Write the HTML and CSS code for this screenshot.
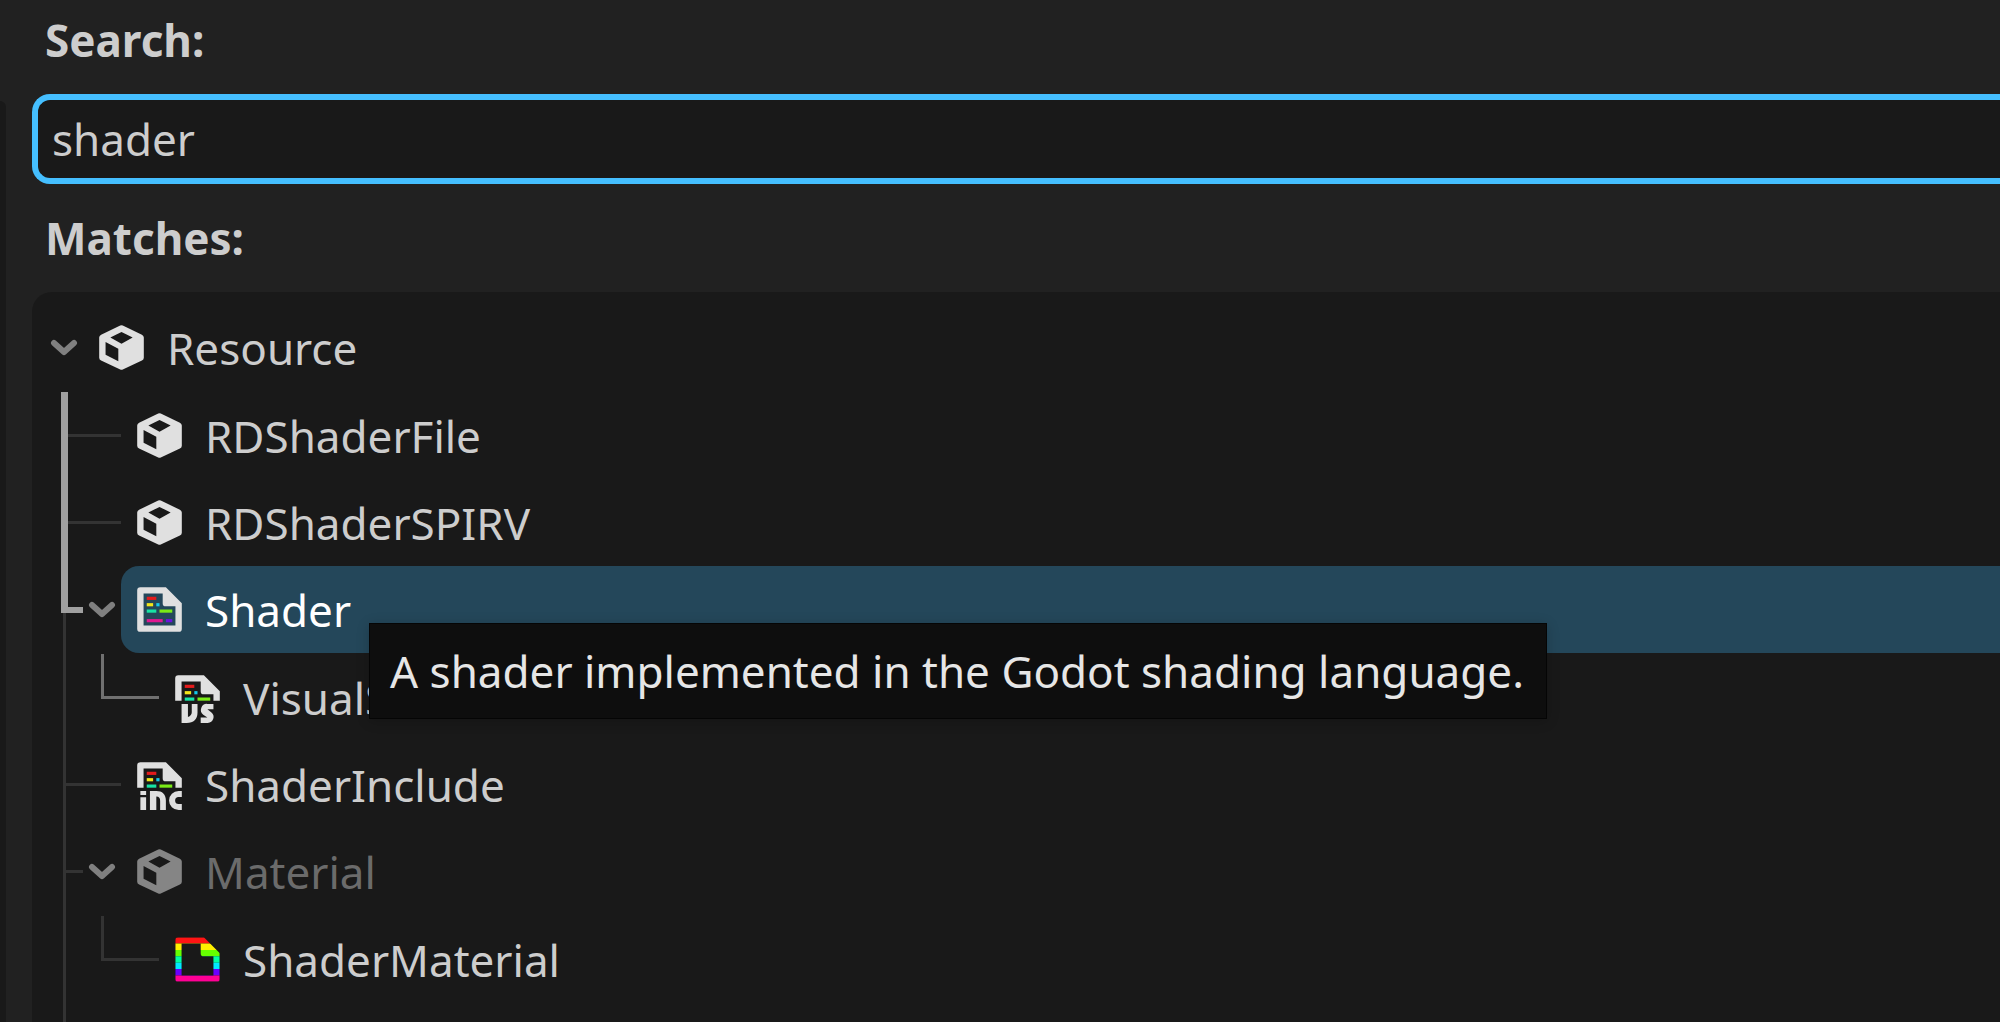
FILE: index.html
```html
<!DOCTYPE html>
<html lang="en">
<head>
  <meta charset="UTF-8" />
  <meta name="viewport" content="width=device-width, initial-scale=1.0" />
  <title>Create New Resource</title>
  <link rel="stylesheet" href="styles.css">
</head>
<body>
  <svg class="sprite" aria-hidden="true">
    <symbol id="chevron" viewBox="0 0 28 18">
      <path d="M4 4l10 9 10-9" fill="none" stroke="currentColor" stroke-width="6" stroke-linecap="round" stroke-linejoin="round" />
    </symbol>
    <symbol id="cube" viewBox="0 0 16 16">
      <path fill="currentColor" fill-rule="evenodd" d="M7.6 1.1a1 1 0 0 1 .8 0l6 2.9a1 1 0 0 1 .6.9v6.3a1 1 0 0 1-.6.9l-6 2.800a1 1 0 0 1-.8 0l-6-2.800a1 1 0 0 1-.6-.9V4.900a1 1 0 0 1 .6-.9zM8 3.100L4.500 4.900 8 6.800l3.500-1.900zM3 6.300v4l4 2V8.400z" />
    </symbol>
    <symbol id="code-lines" viewBox="0 0 16 16">
      <path fill="#e31b1b" d="M4 4h3v1H4z" />
      <path fill="#f2e61a" d="M4 6h2v1H4z" />
      <path fill="#14c8ea" d="M7 6h1v1H7z" />
      <path fill="#17e3a4" d="M4 8h3v1H4z" />
      <path fill="#7aea16" d="M8 8h4v1H8z" />
    </symbol>
    <symbol id="shader" viewBox="0 0 16 16">
      <path fill="#e0e0e0" fill-rule="evenodd" d="M2 1a1 1 0 0 0-1 1v12a1 1 0 0 0 1 1h12a1 1 0 0 0 1-1V6l-5-5zM3 3h6v3a1 1 0 0 0 1 1h3v6H3z" />
      <use href="#code-lines" />
      <path fill="#df1790" d="M4 11h5v1H4z" />
      <path fill="#6a12dc" d="M10 11h2v1h-2z" />
    </symbol>
    <symbol id="file-top" viewBox="0 0 16 16">
      <path fill="#e0e0e0" d="M2 1a1 1 0 0 0-1 1v7h2V3h6v3a1 1 0 0 0 1 1h3v2h2V6l-5-5z" />
      <use href="#code-lines" />
    </symbol>
    <symbol id="visual-shader" viewBox="0 0 16 16">
      <use href="#file-top" />
      <path fill="#e0e0e0" d="M3 10v6h1.600c2.200 0 3.400-1.200 3.400-3.200V10H6.200v2.600q0 1-1.200 1.500V10zM13 10h-2a1.900 1.900 0 0 0-1.200 3.400l1.300.9H9V16h2.200a1.900 1.900 0 0 0 1.100-3.400l-1.200-.9H13z" />
    </symbol>
    <symbol id="shader-include" viewBox="0 0 16 16">
      <use href="#file-top" />
      <path fill="#e0e0e0" d="M2 10h1.800v1.300H2zM2 12h1.800v4H2zM5 10v6h2v-4.200c.9 0 1.200.5 1.200 1.400V16H10v-3c0-2-1.100-3-3-3zM15 10h-1a3 3 0 0 0 0 6h1v-1.900h-1a1.100 1.100 0 0 1 0-2.200h1z" />
    </symbol>
    <clipPath id="file-clip">
      <path clip-rule="evenodd" d="M2 1a1 1 0 0 0-1 1v12a1 1 0 0 0 1 1h12a1 1 0 0 0 1-1V6l-5-5zM3 3h6v3a1 1 0 0 0 1 1h3v6H3z" />
    </clipPath>
    <symbol id="shader-material" viewBox="0 0 16 16">
      <g clip-path="url(#file-clip)">
        <path fill="#ff1414" d="M1 1h14v2H1z" />
        <path fill="#fff000" d="M1 3h14v2H1z" />
        <path fill="#66ff00" d="M1 5h14v2H1z" />
        <path fill="#00ffa2" d="M1 7h14v2H1z" />
        <path fill="#00eaff" d="M1 9h14v2H1z" />
        <path fill="#6a00ff" d="M1 11h14v2H1z" />
        <path fill="#ff0095" d="M1 13h14v2H1z" />
      </g>
    </symbol>
  </svg>

  <div class="side-panel"></div>
  <main class="dialog">
    <label class="heading" for="search">Search:</label>
    <input class="search" type="text" id="search" value="shader" />
    <h2 class="heading" id="matches">Matches:</h2>

    <div class="panel">
      <ul class="tree" role="tree" aria-labelledby="matches">
        <li role="treeitem" aria-expanded="true">
          <div class="row">
            <button class="toggle" aria-label="Collapse Resource"><svg><use href="#chevron" /></svg></button>
            <div class="item"><svg class="icon"><use href="#cube" /></svg>Resource</div>
          </div>
          <ul role="group">
            <li class="leaf active" role="treeitem">
              <div class="row"><div class="item"><svg class="icon"><use href="#cube" /></svg>RDShaderFile</div></div>
            </li>
            <li class="leaf active" role="treeitem">
              <div class="row"><div class="item"><svg class="icon"><use href="#cube" /></svg>RDShaderSPIRV</div></div>
            </li>
            <li class="current" role="treeitem" aria-expanded="true" aria-selected="true">
              <div class="row">
                <span class="elbow"></span>
                <button class="toggle" aria-label="Collapse Shader"><svg><use href="#chevron" /></svg></button>
                <div class="item selected"><svg class="icon"><use href="#shader" /></svg>Shader</div>
                <div class="tooltip" role="tooltip">A shader implemented in the Godot shading language.</div>
              </div>
              <ul class="bright" role="group">
                <li class="leaf last" role="treeitem">
                  <div class="row"><div class="item"><svg class="icon"><use href="#visual-shader" /></svg>VisualShader</div></div>
                </li>
              </ul>
            </li>
            <li class="leaf" role="treeitem">
              <div class="row"><div class="item"><svg class="icon"><use href="#shader-include" /></svg>ShaderInclude</div></div>
            </li>
            <li role="treeitem" aria-expanded="true">
              <div class="row">
                <button class="toggle" aria-label="Collapse Material"><svg><use href="#chevron" /></svg></button>
                <div class="item dimmed"><svg class="icon"><use href="#cube" /></svg>Material</div>
              </div>
              <ul role="group">
                <li class="leaf last" role="treeitem">
                  <div class="row"><div class="item"><svg class="icon"><use href="#shader-material" /></svg>ShaderMaterial</div></div>
                </li>
              </ul>
            </li>
            <li class="more" role="none"></li>
          </ul>
        </li>
      </ul>
    </div>
  </main>
</body>
</html>
```

FILE: styles.css
```css
* {
  box-sizing: border-box;
}
body {
  margin: 0;
  height: 100vh;
  overflow: hidden;
  display: flex;
  background-color: #212121;
  color: #cdcdcd;
  font-family: "Noto Sans", sans-serif;
  font-size: 44px;
  line-height: 60px;
}
.sprite {
  position: absolute;
  width: 0;
  height: 0;
}
.side-panel {
  width: 6px;
  margin-top: 101px;
  background-color: #191919;
  border-top-right-radius: 6px;
}
.dialog {
  flex: 1;
  min-width: 0;
  display: flex;
  flex-direction: column;
  gap: 24px;
  padding: 10px 0 0 26px;
}
.heading {
  margin: 0;
  padding-left: 13px;
  font-size: 44px;
  font-weight: bold;
}
.search {
  width: 100%;
  padding: 9px 14px;
  border: 6px solid #45bfff;
  border-right: none;
  border-radius: 18px 0 0 18px;
  background-color: #191919;
  color: inherit;
  font: inherit;
  outline: none;
}

/* tree */
.panel {
  flex: 1;
  padding: 12px 0 0 13px;
  background-color: #191919;
  border-top-left-radius: 20px;
}
ul {
  list-style: none;
  margin: 0;
  padding: 0;
}
ul ul {
  padding: 1px 0 0 38px;
}
li {
  position: relative;
}
.row {
  position: relative;
  display: flex;
  height: 87px;
}
.leaf > .row {
  padding-left: 38px;
}
.toggle {
  width: 38px;
  padding: 0;
  border: none;
  background: none;
  color: #808080;
  cursor: pointer;
}
.toggle svg {
  display: block;
  width: 28px;
  height: 18px;
  margin: 0 auto;
}
.item {
  flex: 1;
  display: flex;
  align-items: center;
  gap: 20px;
  padding-left: 13px;
  border-radius: 18px 0 0 18px;
}
.icon {
  width: 51px;
  height: 51px;
  color: #e0e0e0;
}
.selected {
  background-color: #24475a;
  color: #fff;
}
.dimmed {
  color: #6b6b6b;
}
.dimmed .icon {
  color: #858585;
}

/* guide lines */
ul ul > li::before,
ul ul > li::after {
  content: "";
  position: absolute;
  background-color: #333;
}
ul ul > li::before {
  left: -20px;
  top: 0;
  width: 3px;
  height: 100%;
}
ul ul > li::after {
  left: -20px;
  top: 42px;
  width: 20px;
  height: 3px;
}
ul ul > .leaf::after {
  width: 58px;
}
ul ul > .last::before {
  height: 45px;
}
ul .bright > li::before,
ul .bright > li::after {
  background-color: #707070;
}
ul ul > .active::before {
  z-index: 1;
  left: -22px;
  width: 7px;
  background-color: #a0a0a0;
}
ul ul > .current::after {
  display: none;
}
.elbow {
  position: absolute;
  left: -22px;
  top: 0;
  width: 22px;
  height: 47px;
  border-left: 7px solid #a0a0a0;
  border-bottom: 6px solid #a0a0a0;
}
.more {
  height: 60px;
}
ul ul > .more::after {
  display: none;
}

.tooltip {
  position: absolute;
  z-index: 1;
  left: 286px;
  top: 57px;
  padding: 17px 22px 17px 20px;
  border: 1px solid #050505;
  background-color: #0e0e0e;
  color: #e6e6e6;
  box-shadow: 0 2px 12px rgba(0, 0, 0, 0.2);
  white-space: nowrap;
}
```
